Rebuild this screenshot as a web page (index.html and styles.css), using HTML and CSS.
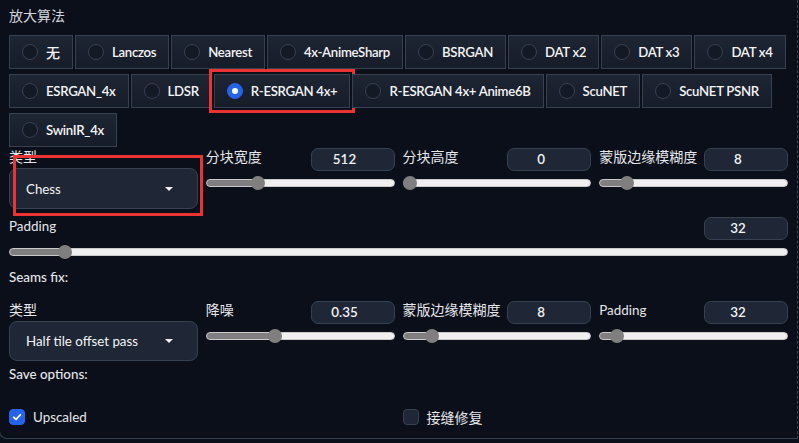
FILE: index.html
```html
<!DOCTYPE html>
<html lang="zh">
<head>
<meta charset="utf-8">
<title>Upscaler settings</title>
<link rel="stylesheet" href="styles.css">
</head>
<body>
<div class="panel">
  <div class="title">放大算法</div>
  <div class="radio-group">
    <div class="radio-row">
      <label class="opt"><span class="radio"></span><span class="cjk">无</span></label>
      <label class="opt"><span class="radio"></span><span>Lanczos</span></label>
      <label class="opt"><span class="radio"></span><span>Nearest</span></label>
      <label class="opt"><span class="radio"></span><span>4x-AnimeSharp</span></label>
      <label class="opt"><span class="radio"></span><span>BSRGAN</span></label>
      <label class="opt"><span class="radio"></span><span>DAT x2</span></label>
      <label class="opt"><span class="radio"></span><span>DAT x3</span></label>
      <label class="opt"><span class="radio"></span><span>DAT x4</span></label>
    </div>
    <div class="radio-row">
      <label class="opt"><span class="radio"></span><span>ESRGAN_4x</span></label>
      <label class="opt"><span class="radio"></span><span>LDSR</span></label>
      <label class="opt selected highlight"><span class="radio on"></span><span>R-ESRGAN 4x+</span></label>
      <label class="opt"><span class="radio"></span><span>R-ESRGAN 4x+ Anime6B</span></label>
      <label class="opt"><span class="radio"></span><span>ScuNET</span></label>
      <label class="opt"><span class="radio"></span><span>ScuNET PSNR</span></label>
    </div>
    <div class="radio-row">
      <label class="opt"><span class="radio"></span><span>SwinIR_4x</span></label>
    </div>
  </div>

  <div class="grid4 row-tiles">
    <div class="col col-annotated">
      <div class="label">类型</div>
      <div class="dropdown"><span>Chess</span><span class="caret"></span></div>
      <div class="annot-box"></div>
    </div>
    <div class="col">
      <div class="head"><span class="label">分块宽度</span><span class="num">512</span></div>
      <div class="slider" style="--v:0.257"><div class="track"></div><div class="thumb"></div></div>
    </div>
    <div class="col">
      <div class="head"><span class="label">分块高度</span><span class="num">0</span></div>
      <div class="slider" style="--v:0"><div class="track"></div><div class="thumb"></div></div>
    </div>
    <div class="col">
      <div class="head"><span class="label">蒙版边缘模糊度</span><span class="num">8</span></div>
      <div class="slider" style="--v:0.12"><div class="track"></div><div class="thumb"></div></div>
    </div>
  </div>

  <div class="full-slider">
    <div class="head"><span class="label latin">Padding</span><span class="num">32</span></div>
    <div class="slider" style="--v:0.064"><div class="track"></div><div class="thumb"></div></div>
  </div>

  <div class="section-label seams">Seams fix:</div>

  <div class="grid4 row-seams">
    <div class="col">
      <div class="label">类型</div>
      <div class="dropdown short"><span>Half tile offset pass</span><span class="caret"></span></div>
    </div>
    <div class="col">
      <div class="head"><span class="label">降噪</span><span class="num">0.35</span></div>
      <div class="slider" style="--v:0.354"><div class="track"></div><div class="thumb"></div></div>
    </div>
    <div class="col">
      <div class="head"><span class="label">蒙版边缘模糊度</span><span class="num">8</span></div>
      <div class="slider" style="--v:0.126"><div class="track"></div><div class="thumb"></div></div>
    </div>
    <div class="col">
      <div class="head"><span class="label latin">Padding</span><span class="num">32</span></div>
      <div class="slider" style="--v:0.063"><div class="track"></div><div class="thumb"></div></div>
    </div>
  </div>

  <div class="section-label save">Save options:</div>

  <div class="checks">
    <label class="check"><span class="box on"><svg viewBox="0 0 16 16" width="16" height="16"><path d="M4.2 8.3 L6.9 10.8 L11.8 5.4" fill="none" stroke="#fff" stroke-width="2" stroke-linecap="round" stroke-linejoin="round"/></svg></span><span class="latin">Upscaled</span></label>
    <label class="check"><span class="box"></span><span>接缝修复</span></label>
  </div>
</div>
</body>
</html>
```

FILE: styles.css
```css
* { box-sizing: border-box; }

html, body {
  margin: 0;
  padding: 0;
  background: #0b0f19;
}

body {
  font-family: Lato, "Noto Sans CJK SC", sans-serif;
  font-size: 14px;
  color: #e5e7eb;
  width: 799px;
  height: 443px;
  overflow: hidden;
}

.panel {
  width: 799px;
  margin-left: -1px;
  padding: 6px 9px 11px 9px;
  border-left: 1px solid #374151;
  border-right: 1px dashed #3b4250;
  border-bottom: 1px solid #374151;
  border-bottom-left-radius: 8px;
}

.title {
  line-height: 20px;
  color: #d1d5db;
  margin-bottom: 9px;
}

/* radio options */
.radio-group {
  display: flex;
  flex-direction: column;
  gap: 5px;
}

.radio-row {
  display: flex;
  gap: 2px;
}

.opt {
  display: flex;
  align-items: center;
  gap: 8px;
  height: 34px;
  padding: 0 12px;
  border: 1px solid #374151;
  background: linear-gradient(to top, #161c28, #1e2533);
  color: #f3f4f6;
  font-weight: 600;
  font-size: 13.2px;
  letter-spacing: -0.3px;
  white-space: nowrap;
  flex: none;
}

.opt .cjk { font-size: 14px; font-weight: 500; letter-spacing: 0; }

.radio {
  width: 16px;
  height: 16px;
  border-radius: 50%;
  border: 1px solid #374151;
  background: #141a25;
  flex: none;
  display: flex;
  align-items: center;
  justify-content: center;
}

.radio.on {
  background: #2563eb;
  border-color: #2563eb;
}

.radio.on::after {
  content: "";
  width: 6px;
  height: 6px;
  border-radius: 50%;
  background: #fff;
}

.highlight {
  outline: 3px solid #ea3434;
  outline-offset: 2px;
}

/* grids */
.grid4 {
  display: grid;
  grid-template-columns: repeat(4, 1fr);
  column-gap: 8px;
}

.row-tiles { margin-top: 1px; }
.row-seams { margin-top: 15px; }

.col {
  display: flex;
  flex-direction: column;
  min-width: 0;
}

.col-annotated { position: relative; }

.annot-box {
  position: absolute;
  left: 4px;
  top: 7px;
  width: 190px;
  height: 61px;
  border: 3px solid #ea3434;
  pointer-events: none;
}

.label {
  line-height: 18px;
  color: #e5e7eb;
  white-space: nowrap;
}

.latin { font-size: 13.4px; }

.col > .label { margin-bottom: 2px; }

.dropdown {
  height: 41px;
  display: flex;
  align-items: center;
  justify-content: space-between;
  padding: 0 24px 0 16px;
  background: #1f2736;
  border: 1px solid #374151;
  border-radius: 8px;
  color: #f3f4f6;
  font-size: 13.3px;
}

.dropdown.short { height: 40px; }

.caret {
  width: 0;
  height: 0;
  border-left: 4px solid transparent;
  border-right: 4px solid transparent;
  border-top: 4px solid #f3f4f6;
}

.head {
  display: flex;
  justify-content: space-between;
  align-items: flex-start;
  height: 23px;
}

.num {
  width: 84px;
  height: 23px;
  line-height: 21px;
  padding-right: 16px;
  text-align: center;
  background: #1f2736;
  border: 1px solid #374151;
  border-radius: 7px;
  color: #f3f4f6;
  font-weight: 600;
  font-size: 13.4px;
}

/* slider */
.slider {
  position: relative;
  height: 14px;
  margin-top: 5px;
  display: flex;
  align-items: center;
}

.track {
  flex: 1;
  height: 8px;
  border-radius: 4px;
  border: 1px solid #c9c9c9;
  background: linear-gradient(to right,
    #7f7f7f 0,
    #7f7f7f calc(7px + var(--v) * (100% - 14px)),
    #efefef calc(7px + var(--v) * (100% - 14px)),
    #efefef 100%);
}

.thumb {
  position: absolute;
  top: 0;
  left: calc(var(--v) * (100% - 14px));
  width: 14px;
  height: 14px;
  border-radius: 50%;
  background: #7f7f7f;
}

.full-slider { margin-top: 8px; }

.section-label {
  line-height: 18px;
  color: #e5e7eb;
  font-size: 13.4px;
  font-weight: 500;
}

.seams { margin-top: 9px; }
.save { margin-top: 4px; }

/* checkboxes */
.checks {
  display: grid;
  grid-template-columns: 1fr 1fr;
  column-gap: 8px;
  margin-top: 24px;
}

.check {
  display: flex;
  align-items: center;
  gap: 8px;
  height: 20px;
  font-size: 14px;
  color: #e5e7eb;
}

.box {
  width: 16px;
  height: 16px;
  border-radius: 4px;
  border: 1px solid #374151;
  background: #1f2736;
  flex: none;
  display: flex;
  align-items: center;
  justify-content: center;
}

.box.on {
  background: #2563eb;
  border-color: #2563eb;
}

.box svg { display: block; }
```
